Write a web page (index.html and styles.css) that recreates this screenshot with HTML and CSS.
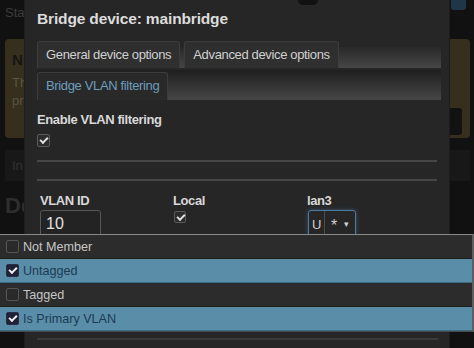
FILE: index.html
```html
<!DOCTYPE html>
<html>
<head>
<meta charset="utf-8">
<link rel="stylesheet" href="styles.css">
</head>
<body>
<div class="page">
  <div class="page-head">
    <span class="crumb">Status</span>
    <span class="head-btn"></span>
  </div>
  <div class="alert">
    <h4>N</h4>
    <p>Th</p>
    <p>pr</p>
    <div class="alert-actions"><span class="alert-btn"></span></div>
  </div>
  <div class="page-tabs"><span>In</span></div>
  <h2 class="page-title">De</h2>
</div>

<div class="modal">
  <div class="blob"></div>
  <h3 class="modal-title">Bridge device: mainbridge</h3>
  <ul class="tabs tabs-first">
    <li class="tab">General device options</li>
    <li class="tab">Advanced device options</li>
  </ul>
  <ul class="tabs tabs-second">
    <li class="tab active">Bridge VLAN filtering</li>
  </ul>
  <div class="field">
    <div class="label">Enable VLAN filtering</div>
    <span class="cbox checked"></span>
  </div>
  <hr class="sep sep-a">
  <hr class="sep sep-b">
  <div class="vlan-row">
    <div class="col col-id">
      <div class="label">VLAN ID</div>
      <div class="input">10</div>
    </div>
    <div class="col col-local">
      <div class="label">Local</div>
      <span class="cbox checked small"></span>
    </div>
    <div class="col col-port">
      <div class="label">lan3</div>
      <div class="select">
        <span class="sel-u">U</span>
        <span class="sel-div"></span>
        <span class="sel-star">*</span>
        <span class="sel-caret">▾</span>
      </div>
    </div>
  </div>
  <hr class="sep sep-c">
</div>

<ul class="menu">
  <li class="opt"><span class="mbox"></span>Not Member</li>
  <li class="opt sel"><span class="mbox on"></span>Untagged</li>
  <li class="opt"><span class="mbox"></span>Tagged</li>
  <li class="opt sel"><span class="mbox on"></span>Is Primary VLAN</li>
</ul>
</body>
</html>
```

FILE: styles.css
```css
* { box-sizing: border-box; }
html, body { margin: 0; padding: 0; }
body {
  width: 474px;
  height: 348px;
  overflow: hidden;
  background: #111111;
  font-family: "Liberation Sans", Arial, sans-serif;
  font-size: 13px;
  color: #d6d6d6;
  position: relative;
}

/* dimmed page behind the modal */
.page { padding: 0 4px 0 5px; }
.page-head {
  display: flex;
  justify-content: space-between;
  height: 39px;
}
.crumb { color: #3c3c3c; padding-top: 5px; font-size: 13px; }
.head-btn {
  width: 15px; height: 10px;
  background: #1f3646;
  border-radius: 0 0 3px 3px;
  margin-right: 4px;
}
.alert {
  background: #362f1d;
  border-radius: 4px;
  height: 99px;
  padding: 12px 7px;
  color: #4a4a4a;
  position: relative;
}
.alert h4 { margin: 0 0 6px; font-size: 15px; color: #151515; }
.alert p { margin: 0; line-height: 18px; color: #5a5440; font-size: 13px; }
.alert-actions {
  position: absolute;
  right: 8px; bottom: 3px;
}
.alert-btn {
  display: block;
  width: 14px; height: 27px;
  background: #121212;
  border-radius: 3px;
}
.page-tabs {
  margin-top: 12px;
  height: 31px;
  background: #181818;
  color: #333;
  padding: 8px 7px;
  font-size: 13px;
}
.page-title {
  margin: 12px 0 0;
  font-size: 22px;
  color: #2e2e2e;
}

/* modal */
.modal {
  position: absolute;
  left: 24px;
  top: 0;
  width: 426px;
  height: 348px;
  background: #262626;
  border-left: 1px solid #1d1d1d;
  border-right: 1px solid #1d1d1d;
  padding: 10px 8px 0 12px;
}
.blob {
  position: absolute;
  left: 273px; top: -6px;
  width: 20px; height: 11px;
  background: #111;
  border-radius: 5px;
}
.modal-title {
  margin: 0;
  font-size: 15.5px;
  letter-spacing: -0.15px;
  font-weight: bold;
  color: #dcdcdc;
  line-height: 18px;
}
.tabs {
  list-style: none;
  margin: 0;
  padding: 0;
  display: flex;
  gap: 4px;
  background: linear-gradient(#242424, #474747);
}
.tabs-first {
  margin-top: 13px;
  background: linear-gradient(#292929, #464646) no-repeat left bottom / 100% 21px;
}
.tabs-second {
  margin-top: 2px;
  height: 30px;
  padding-top: 2px;
  background: linear-gradient(#1f1f1f, #464646);
}
.tab {
  height: 27px;
  line-height: 26px;
  padding: 0 8px;
  letter-spacing: -0.35px;
  background: linear-gradient(#2e2e2e, #303030);
  border: 1px solid #3c3c3c;
  border-bottom: none;
  border-radius: 3px 3px 0 0;
  color: #d0d0d0;
}
.tab.active {
  height: 28px;
  background: #292929;
  color: #6d9ebd;
}
.field { margin-top: 12px; }
.label {
  font-weight: bold;
  color: #d8d8d8;
  line-height: 15px;
  letter-spacing: -0.4px;
}
.cbox {
  display: block;
  width: 13px; height: 13px;
  margin-top: 7px;
  border: 1px solid #5a5a5a;
  border-radius: 2px;
  background: #2c2c2c;
  position: relative;
}
.cbox.checked::after, .mbox.on::after {
  content: "";
  position: absolute;
  left: 2px;
  top: 2px;
  width: 6px; height: 3px;
  border-left: 2px solid #e0e0e0;
  border-bottom: 2px solid #e0e0e0;
  transform: rotate(-45deg);
  transform-origin: center;
}
.cbox.small { width: 12px; height: 12px; margin-top: 3px; margin-left: 1px; }
.sep {
  border: none;
  height: 2px;
  background: #464646;
  margin: 0;
  width: 400px;
}
.sep-a { margin-top: 13px; }
.sep-b { margin-top: 17px; }
.vlan-row {
  display: flex;
  margin-top: 12px;
}
.col-id { width: 136px; padding-left: 3px; }
.col-local { width: 133px; }
.col-port { padding-left: 1px; }
.input {
  margin-top: 2px;
  width: 61px;
  height: 28px;
  border: 1px solid #575757;
  border-radius: 3px;
  background: #232323;
  font-size: 16px;
  line-height: 26px;
  padding-left: 5px;
  color: #e2e2e2;
}
.select {
  margin-top: 2px;
  margin-left: 1px;
  width: 48px;
  height: 28px;
  border: 1px solid #4d7ba0;
  border-radius: 3px;
  box-shadow: 0 0 4px rgba(80, 140, 200, 0.45);
  display: flex;
  align-items: center;
  color: #cfcfcf;
  font-size: 13px;
}
.sel-u { padding-left: 3px; width: 15px; }
.sel-div { width: 1px; height: 26px; background: #4c4c4c; }
.sel-star { padding-left: 6px; font-size: 16px; padding-top: 4px; width: 19px; }
.sel-caret { font-size: 9px; color: #cfcfcf; }
.sep-c { position: absolute; left: 12px; top: 338px; width: 401px; height: 2px; background: #3a3a3a; }

/* dropdown menu */
.menu {
  position: absolute;
  left: 0; top: 234px;
  width: 474px;
  margin: 0; padding: 0;
  list-style: none;
  border-top: 1px solid #8a8a8a;
  border-right: 2px solid #5e5e5e;
  border-bottom: 1px solid #4a4a4a;
  background: #222;
}
.opt {
  display: flex;
  align-items: center;
  height: 24px;
  padding-left: 6px;
  font-size: 12.6px;
  color: #c6c6c6;
  background: #2c2c2c;
  border-bottom: 1px solid #1e1e1e;
}
.opt.sel {
  background: #5a8ea8;
  color: #1c3a55;
  border-bottom-color: #3e6c84;
}
.mbox {
  position: relative;
  width: 13px; height: 13px;
  margin-right: 4px;
  border: 1px solid #555;
  border-radius: 2px;
  background: #2a2a2a;
}
.mbox.on {
  background: #1f2236;
  border-color: #2a2e44;
}
.mbox.on::after { border-color: #f0f0f0; }
```
